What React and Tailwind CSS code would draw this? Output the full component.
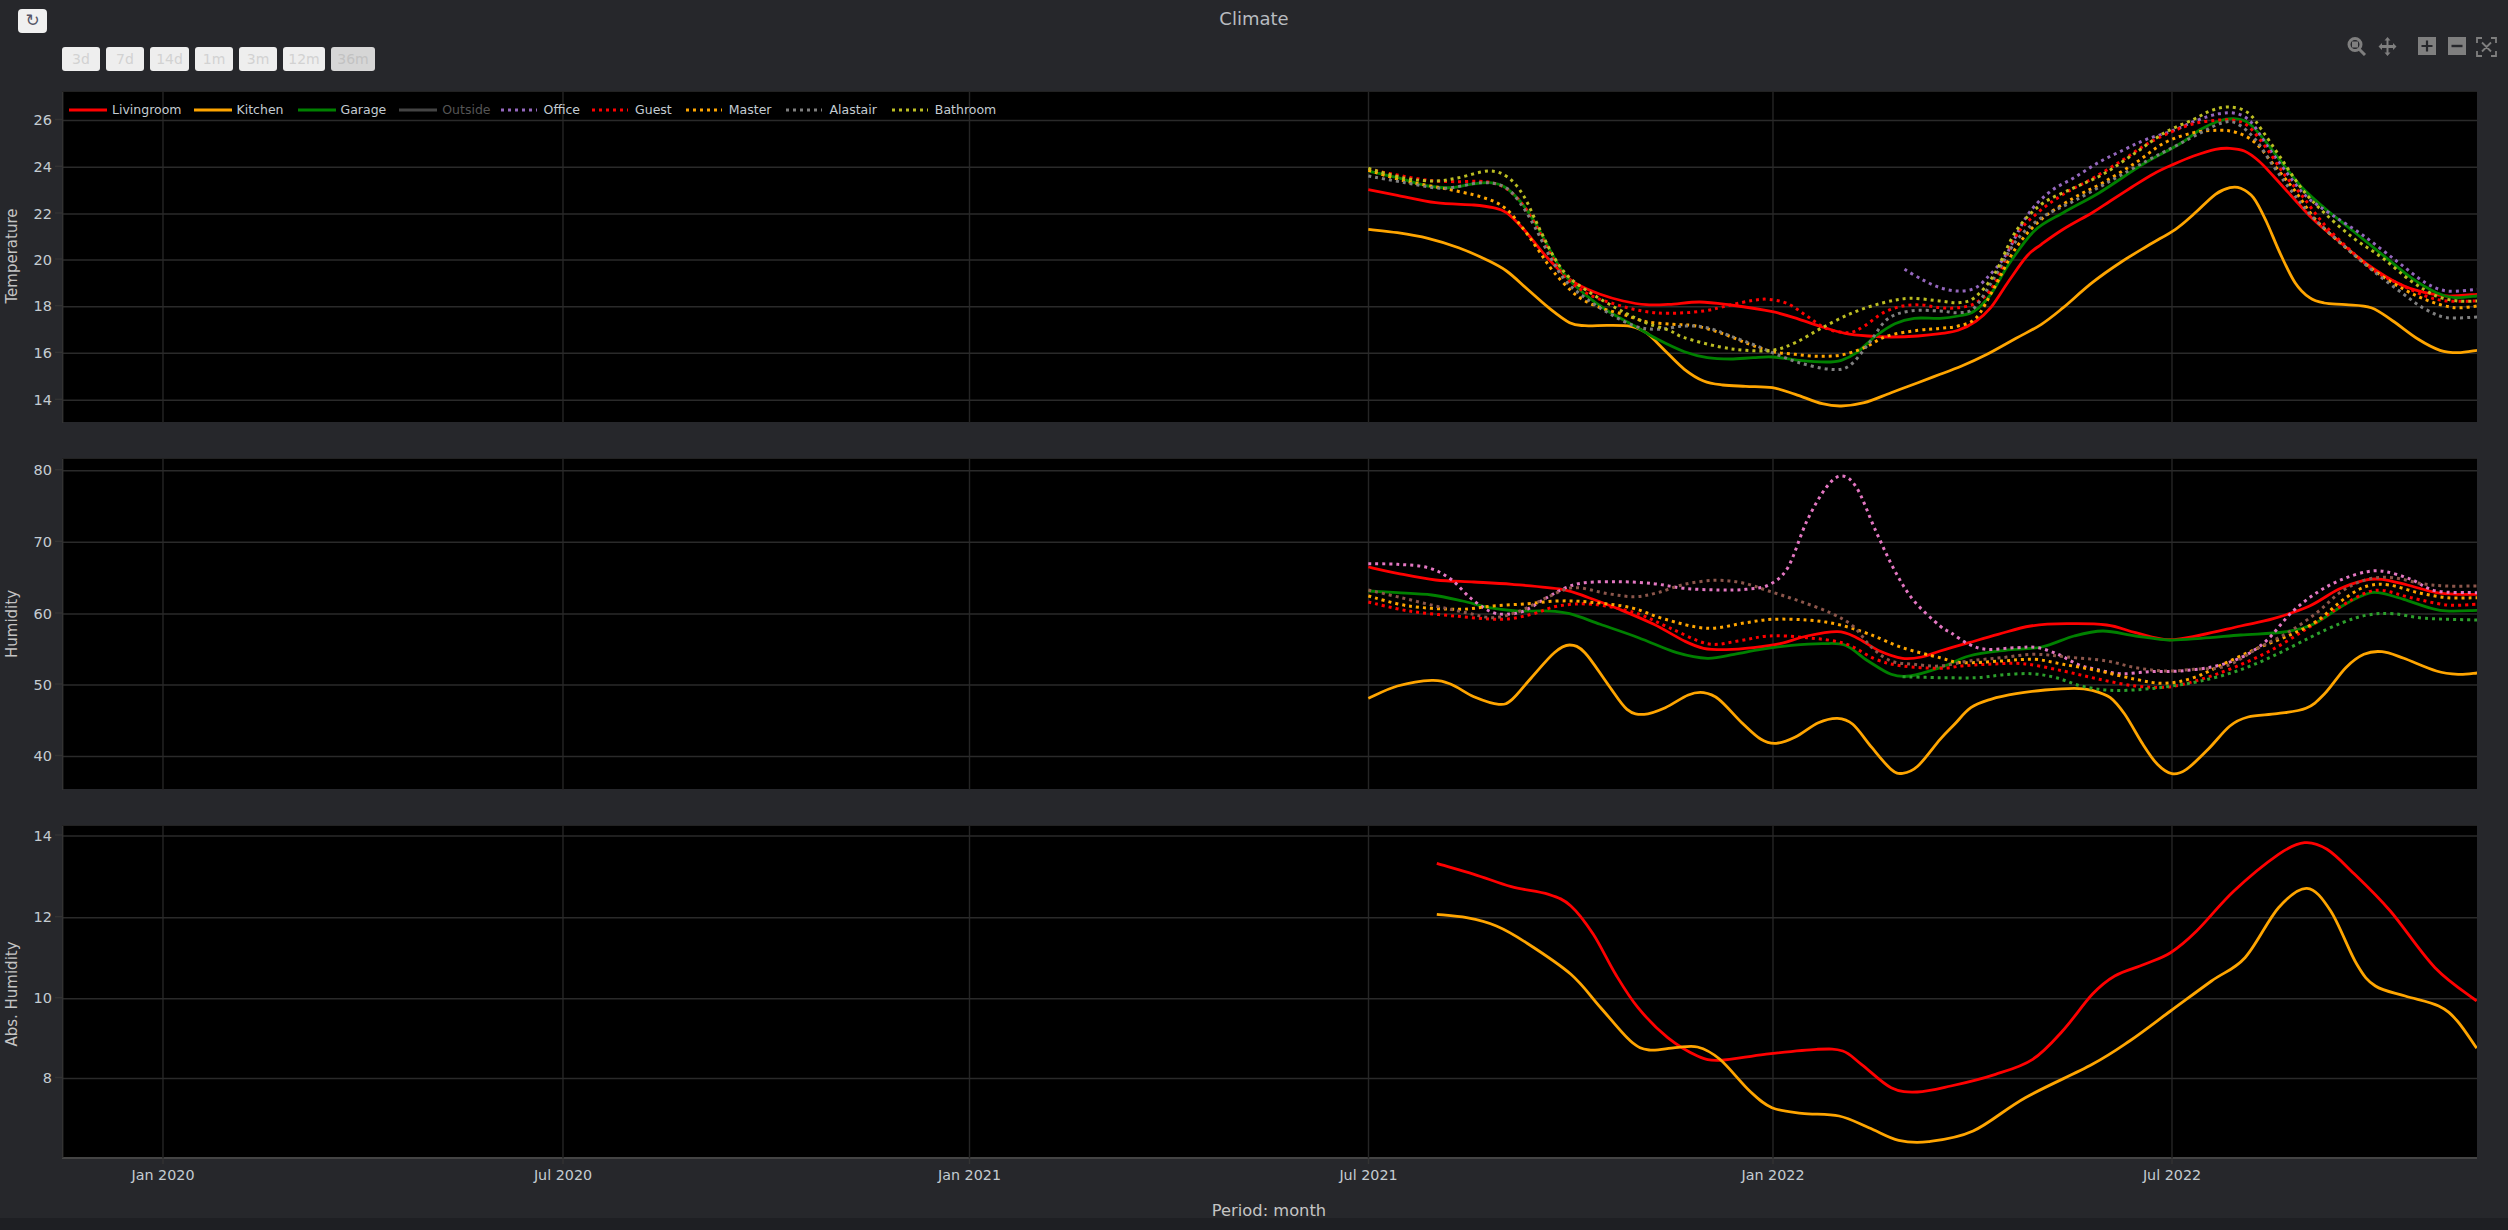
const SANS = "font-['DejaVu_Sans',sans-serif]";
const FONT = "'DejaVu Sans', sans-serif";

const RED = "#ff0000";
const ORANGE = "#ffa500";
const GREEN = "#008000";

// the curves were read off crops of the chart, so each chart has its own crop scale
const crop = (left, right, top, scaleL, scaleR) => [
  ...left.map(([x, y]) => [1340 + x / scaleL, top + y / 3]),
  ...right.map(([x, y]) => [1940 + x / scaleR, top + y / 3]),
];
const tempCrop = (l, r) => crop(l, r, 80, 2.613, 2.76);
const humCrop = (l, r) => crop(l, r, 450, 2.613, 2.76);
const absCrop = (pts) => pts.map(([x, y]) => [1340 + x / 1.3425, 810 + y / 3]);

function smoothPath(raw) {
  const pts = raw.filter((p, i) => i === 0 || p[0] - raw[i - 1][0] > 1);
  let d = `M${pts[0][0].toFixed(1)} ${pts[0][1].toFixed(1)}`;
  for (let i = 0; i < pts.length - 1; i++) {
    const p0 = pts[i - 1] || pts[i];
    const p1 = pts[i];
    const p2 = pts[i + 1];
    const p3 = pts[i + 2] || p2;
    const c1 = [p1[0] + (p2[0] - p0[0]) / 6, p1[1] + (p2[1] - p0[1]) / 6];
    const c2 = [p2[0] - (p3[0] - p1[0]) / 6, p2[1] - (p3[1] - p1[1]) / 6];
    d += `C${c1[0].toFixed(1)} ${c1[1].toFixed(1)} ${c2[0].toFixed(1)} ${c2[1].toFixed(1)} ${p2[0].toFixed(1)} ${p2[1].toFixed(1)}`;
  }
  return d;
}

const tempSeries = [
  { color: RED, pts: tempCrop(
    [[74,326],[150,343],[250,365],[350,372],[400,380],[435,395],[480,445],[530,515],[580,575],[620,610],[680,640],[740,660],[800,671],[860,670],[940,663],[1020,672],[1130,692],[1200,715],[1260,738],[1320,757],[1380,765],[1440,768],[1510,765],[1568,758]],
    [[0,758],[50,748],[100,720],[140,680],[190,600],[240,525],[280,490],[340,445],[420,395],[470,360],[530,318],[590,278],[640,252],[700,225],[760,205],[800,202],[840,210],[880,240],[920,285],[970,345],[1030,415],[1100,480],[1180,550],[1270,610],[1340,635],[1400,645],[1482,640]]) },
  { color: ORANGE, pts: tempCrop(
    [[74,445],[150,455],[230,472],[310,500],[380,535],[435,570],[490,625],[545,680],[600,725],[640,734],[700,733],[760,736],[800,755],[850,810],[900,865],[950,900],[1000,912],[1060,916],[1130,920],[1190,940],[1260,968],[1310,975],[1370,965],[1440,935],[1510,905],[1568,880]],
    [[0,885],[60,855],[130,820],[210,772],[280,730],[340,680],[420,605],[500,543],[580,490],[650,445],[700,400],[760,340],[800,320],[830,322],[865,350],[900,420],[940,520],[980,605],[1020,650],[1060,666],[1120,671],[1190,680],[1250,720],[1320,775],[1380,808],[1430,815],[1482,808]]) },
  { color: GREEN, pts: tempCrop(
    [[74,270],[150,290],[230,315],[290,320],[340,310],[390,305],[430,318],[470,360],[510,425],[550,510],[590,585],[640,640],[700,690],[770,735],[830,775],[900,812],[960,830],[1020,834],[1080,830],[1130,828],[1200,838],[1270,843],[1310,838],[1350,815],[1400,765],[1450,728],[1500,712],[1568,712]],
    [[0,712],[50,705],[95,690],[140,640],[190,550],[260,450],[340,395],[440,335],[560,250],[660,190],[720,145],[770,120],[810,113],[850,125],[890,170],[940,240],[1000,320],[1060,380],[1140,450],[1220,520],[1300,590],[1370,635],[1420,650],[1482,645]]) },
  { color: "#9467bd", dotted: true, pts: tempCrop(
    [[1475,565],[1520,595],[1568,620]],
    [[0,618],[50,630],[95,622],[130,590],[180,525],[240,405],[300,335],[370,290],[440,243],[510,205],[570,175],[640,150],[710,118],[770,98],[820,98],[860,125],[900,190],[950,265],[1010,345],[1080,400],[1170,465],[1260,540],[1340,605],[1400,630],[1482,625]]) },
  { color: RED, dotted: true, pts: tempCrop(
    [[74,265],[140,280],[230,298],[300,302],[380,302],[430,320],[470,360],[510,430],[550,520],[590,590],[650,640],[720,670],[790,690],[860,697],[950,690],[1020,672],[1080,658],[1120,655],[1170,668],[1220,705],[1270,742],[1330,755],[1370,735],[1420,695],[1470,675],[1520,672],[1568,680]],
    [[0,680],[50,680],[100,665],[150,610],[210,465],[270,395],[340,340],[420,293],[500,240],[570,190],[640,152],[700,128],[760,118],[810,118],[850,135],[900,200],[950,280],[1000,345],[1060,430],[1130,505],[1200,570],[1270,610],[1340,645],[1400,660],[1482,660]]) },
  { color: ORANGE, dotted: true, pts: tempCrop(
    [[74,268],[170,300],[270,322],[370,348],[430,380],[480,445],[520,510],[560,575],[620,645],[680,680],[740,700],[800,722],[870,730],[930,735],[1000,758],[1070,790],[1130,812],[1190,820],[1250,826],[1310,822],[1370,800],[1430,765],[1510,748],[1568,742]],
    [[0,742],[50,735],[100,710],[150,620],[210,500],[280,415],[370,350],[450,305],[540,245],[620,185],[700,155],[770,148],[820,155],[870,185],[920,250],[980,330],[1040,420],[1120,500],[1200,570],[1280,625],[1350,660],[1420,680],[1482,675]]) },
  { color: "#7f7f7f", dotted: true, pts: tempCrop(
    [[74,285],[170,305],[270,322],[370,305],[430,318],[470,365],[510,440],[550,530],[590,600],[640,650],[700,695],[770,735],[830,745],[900,735],[960,740],[1020,765],[1090,795],[1130,815],[1200,845],[1280,865],[1330,855],[1380,790],[1430,715],[1490,690],[1568,690]],
    [[0,692],[50,695],[95,680],[150,590],[210,480],[280,410],[370,360],[470,300],[570,240],[650,195],[720,155],[780,125],[820,128],[870,175],[920,255],[970,330],[1030,410],[1110,490],[1190,565],[1280,640],[1340,685],[1400,710],[1482,708]]) },
  { color: "#bcbd22", dotted: true, pts: tempCrop(
    [[74,262],[170,292],[250,300],[310,290],[390,270],[440,290],[480,345],[520,440],[560,530],[600,590],[660,640],[720,680],[770,710],[810,730],[860,748],[900,770],[990,797],[1060,808],[1130,808],[1190,785],[1260,740],[1340,695],[1420,665],[1490,652],[1568,660]],
    [[0,660],[50,665],[95,650],[150,580],[210,450],[280,370],[370,320],[450,280],[540,215],[620,155],[700,115],[750,88],[800,78],[850,95],[890,150],[940,230],[1000,325],[1060,395],[1140,470],[1220,530],[1300,600],[1370,645],[1430,660],[1482,660]]) },
];

const humSeries = [
  { color: RED, pts: humCrop(
    [[74,348],[150,367],[250,387],[350,393],[450,400],[580,415],[650,440],[730,475],[820,520],[900,570],[950,592],[1010,596],[1080,590],[1150,578],[1220,555],[1300,542],[1350,560],[1410,600],[1470,622],[1520,618],[1568,600]],
    [[0,602],[80,575],[160,550],[250,525],[350,518],[460,522],[540,545],[630,566],[720,552],[830,525],[920,503],[1020,465],[1100,415],[1170,388],[1220,385],[1290,402],[1370,425],[1430,430],[1482,430]]) },
  { color: ORANGE, pts: humCrop(
    [[74,742],[150,705],[240,688],[290,700],[350,737],[415,760],[450,745],[500,680],[560,605],[600,582],[640,605],[700,700],[750,775],[795,790],[850,770],[910,732],[950,725],[990,745],[1050,815],[1100,865],[1140,877],[1190,858],[1250,815],[1300,802],[1340,820],[1390,890],[1440,955],[1470,967],[1510,945],[1568,865]],
    [[0,875],[40,820],[85,770],[140,745],[210,728],[290,717],[370,712],[420,718],[470,740],[510,790],[560,880],[600,940],[640,968],[680,955],[740,895],[800,825],[850,798],[930,788],[1010,772],[1060,730],[1120,650],[1170,610],[1220,602],[1280,622],[1370,660],[1430,670],[1482,666]]) },
  { color: GREEN, pts: humCrop(
    [[74,420],[150,425],[240,432],[320,450],[390,470],[460,480],[540,480],[600,488],[680,520],[780,560],[880,605],[960,622],[1030,610],[1100,595],[1180,583],[1260,578],[1320,583],[1380,630],[1440,670],[1490,675],[1568,650]],
    [[0,648],[80,615],[180,598],[280,588],[370,555],[450,540],[540,555],[630,567],[720,562],[830,552],[950,543],[1030,520],[1110,465],[1170,432],[1210,425],[1280,445],[1380,478],[1482,478]]) },
  { color: "#e377c2", dotted: true, pts: humCrop(
    [[74,338],[150,340],[230,350],[290,385],[340,440],[390,480],[430,490],[480,480],[540,440],[590,410],[640,395],[730,392],[820,398],[900,412],[990,417],[1060,415],[1120,402],[1170,350],[1220,210],[1270,110],[1310,75],[1350,110],[1400,240],[1450,360],[1500,450],[1568,525]],
    [[0,520],[30,545],[80,580],[130,595],[210,590],[270,590],[330,612],[380,640],[430,655],[500,668],[580,662],[660,660],[750,648],[830,620],[900,570],[970,485],[1040,425],[1110,385],[1180,362],[1230,362],[1300,385],[1370,420],[1482,425]]) },
  { color: RED, dotted: true, pts: humCrop(
    [[74,453],[180,480],[300,495],[420,505],[500,490],[570,465],[660,460],[770,485],[860,530],[960,578],[1040,570],[1120,555],[1220,560],[1320,578],[1400,625],[1470,645],[1568,652]],
    [[0,650],[60,645],[130,640],[230,638],[340,660],[440,685],[540,705],[630,708],[720,685],[810,650],[910,600],[1010,535],[1100,470],[1170,428],[1220,418],[1300,440],[1400,462],[1482,460]]) },
  { color: ORANGE, dotted: true, pts: humCrop(
    [[74,435],[180,465],[310,475],[400,465],[490,458],[570,450],[650,453],[760,470],[850,505],[960,532],[1060,515],[1130,505],[1220,507],[1300,520],[1380,548],[1470,590],[1568,620]],
    [[0,620],[60,635],[170,630],[260,625],[340,640],[440,660],[540,685],[620,697],[700,680],[790,635],[880,590],[970,550],[1040,510],[1120,440],[1180,405],[1240,402],[1320,425],[1400,440],[1482,440]]) },
  { color: "#8c564b", dotted: true, pts: humCrop(
    [[74,417],[160,440],[250,465],[330,485],[400,500],[470,480],[540,440],[610,410],[700,428],[770,437],[830,425],[900,400],[980,388],[1050,395],[1120,420],[1200,450],[1280,485],[1340,525],[1390,590],[1440,630],[1500,640],[1568,645]],
    [[0,640],[80,630],[170,620],[260,610],[350,618],[460,630],[540,650],[620,660],[700,655],[790,645],[880,590],[960,545],[1040,485],[1110,420],[1180,385],[1250,380],[1330,398],[1400,405],[1482,405]]) },
  { color: "#2ca02c", dotted: true, pts: humCrop(
    [[1470,677],[1568,680]],
    [[0,680],[100,680],[170,672],[250,668],[320,680],[390,705],[470,718],[560,715],[640,705],[720,690],[820,660],[920,615],[1020,560],[1110,515],[1180,492],[1250,488],[1340,502],[1482,507]]) },
];

const absSeries = [
  { color: RED, pts: absCrop([[130,157],[180,190],[230,227],[280,250],[310,285],[340,370],[370,490],[400,590],[440,680],[480,735],[510,748],[570,730],[640,715],[675,720],[700,760],[740,830],[775,843],[820,825],[880,790],[930,745],[970,660],[1010,550],[1040,495],[1080,460],[1115,425],[1150,360],[1200,240],[1260,130],[1295,95],[1325,115],[1360,185],[1410,300],[1470,470],[1526,570]]) },
  { color: ORANGE, pts: absCrop([[130,310],[170,320],[210,345],[250,395],[310,490],[350,590],[390,690],[415,717],[450,710],[480,708],[510,745],[550,840],[580,890],[620,907],[670,915],[710,950],[750,988],[790,992],[850,960],[920,860],[1010,760],[1060,690],[1115,600],[1170,510],[1215,440],[1260,290],[1298,232],[1330,300],[1365,460],[1390,525],[1430,555],[1475,585],[1500,630],[1526,712]]) },
];

const VERTICALS = [163, 563, 969.5, 1368.5, 1773, 2172];

const legend = [
  { name: "Livingroom", color: RED, gap: "mr-[12px]" },
  { name: "Kitchen", color: ORANGE, gap: "mr-[14px]" },
  { name: "Garage", color: GREEN, gap: "mr-[13px]" },
  { name: "Outside", color: "#444444", muted: true, gap: "mr-[10px]" },
  { name: "Office", color: "#9467bd", dotted: true, gap: "mr-[12px]" },
  { name: "Guest", color: RED, dotted: true, gap: "mr-[14px]" },
  { name: "Master", color: ORANGE, dotted: true, gap: "mr-[15px]" },
  { name: "Alastair", color: "#7f7f7f", dotted: true, gap: "mr-[15px]" },
  { name: "Bathroom", color: "#bcbd22", dotted: true, gap: "" },
];

const ranges = [
  { label: "3d", width: "w-[38px]" },
  { label: "7d", width: "w-[38px]" },
  { label: "14d", width: "w-[39px]" },
  { label: "1m", width: "w-[38px]" },
  { label: "3m", width: "w-[38px]" },
  { label: "12m", width: "w-[42px]" },
  { label: "36m", width: "w-[44px]", active: true },
];

function Legend() {
  return (
    <div className={`absolute left-[7px] top-[9px] flex items-center text-[12.5px] leading-[18px] ${SANS}`}>
      {legend.map((item) => (
        <div key={item.name} className={`flex items-center ${item.gap}`}>
          <svg width="38" height="4" className="mr-[5px] shrink-0">
            <line
              x1="0"
              y1="2"
              x2={item.dotted ? 36 : 38}
              y2="2"
              stroke={item.color}
              strokeWidth="3"
              strokeDasharray={item.dotted ? "3 4" : undefined}
            />
          </svg>
          <span className={item.muted ? "text-[#555555]" : "text-[#c4ccd2]"}>{item.name}</span>
        </div>
      ))}
    </div>
  );
}

function Chart({ top, height, ticks, title, titleY, series, children, mt }) {
  return (
    <div className={`flex ${mt}`} style={{ height }}>
      <svg width="62" height={height} viewBox={`0 ${top} 62 ${height}`} className="shrink-0">
        <text
          transform={`translate(17 ${titleY}) rotate(-90)`}
          textAnchor="middle"
          fill="#c4c4c4"
          fontFamily={FONT}
          fontSize="15"
        >
          {title}
        </text>
        {ticks.map(([label, y]) => (
          <g key={label}>
            <line x1="55" y1={y} x2="62" y2={y} stroke="#333333" strokeWidth="1.4" />
            <text x="52" y={y + 5.5} textAnchor="end" fill="#c4ccd2" fontFamily={FONT} fontSize="14.5">
              {label}
            </text>
          </g>
        ))}
      </svg>
      <div className="relative w-[2415px] shrink-0 border-t border-[#222222] bg-black">
        <svg width="2415" height={height} viewBox={`62 ${top} 2415 ${height}`} className="absolute left-0 top-0">
          {VERTICALS.map((x) => (
            <line key={x} x1={x} y1={top} x2={x} y2={top + height} stroke="#252525" strokeWidth="1.4" />
          ))}
          {ticks.map(([label, y]) => (
            <line key={label} x1="62" y1={y} x2="2477" y2={y} stroke="#2a2a2a" strokeWidth="1.5" />
          ))}
          <line x1="62.7" y1={top} x2="62.7" y2={top + height} stroke="#333333" strokeWidth="1.4" />
          {series.map((s, i) => (
            <path
              key={i}
              d={smoothPath(s.pts)}
              fill="none"
              stroke={s.color}
              strokeWidth={s.dotted ? 3 : 2.8}
              strokeDasharray={s.dotted ? "3 4" : undefined}
            />
          ))}
        </svg>
        {children}
      </div>
    </div>
  );
}

function XAxis() {
  const labels = ["Jan 2020", "Jul 2020", "Jan 2021", "Jul 2021", "Jan 2022", "Jul 2022"];
  return (
    <svg width="2508" height="73" viewBox="0 1157 2508 73" className="block">
      <line x1="62" y1="1158" x2="2477" y2="1158" stroke="#444444" strokeWidth="2" />
      {VERTICALS.map((x, i) => (
        <g key={x}>
          <line x1={x} y1="1157" x2={x} y2="1164" stroke="#333333" strokeWidth="1.4" />
          <text x={x} y="1180" textAnchor="middle" fill="#c4ccd2" fontFamily={FONT} fontSize="14.3">
            {labels[i]}
          </text>
        </g>
      ))}
      <text x="1269" y="1216" textAnchor="middle" fill="#c4c4c4" fontFamily={FONT} fontSize="16.3">
        Period: month
      </text>
    </svg>
  );
}

function ModeBar() {
  return (
    <div className="flex items-start justify-end pr-[11px] pt-[37px]">
      <svg width="20" height="19" viewBox="0 0 20 19" className="mr-[11px]">
        <circle cx="8" cy="7.5" r="6" fill="none" stroke="#7f7f7f" strokeWidth="3" />
        <rect x="5" y="4.5" width="6" height="6" fill="#7f7f7f" />
        <path d="M12 12l6 6" stroke="#7f7f7f" strokeWidth="3" />
      </svg>
      <svg width="19" height="19" viewBox="0 0 19 19" className="mr-[21px]">
        <path
          d="M9.5 0l3 3.5h-2v4.5h4.5v-2l3.5 3.5-3.5 3.5v-2h-4.500v4.500h2l-3 3.500-3-3.500h2v-4.500h-4.500v2l-3.500-3.500 3.500-3.500v2h4.500v-4.500h-2z"
          fill="#7f7f7f"
        />
      </svg>
      <svg width="18" height="18" viewBox="0 0 18 18" className="mr-[12px]">
        <rect width="18" height="18" fill="#7f7f7f" />
        <path d="M9 3.500v11M3.500 9h11" stroke="#26272b" strokeWidth="2.200" />
      </svg>
      <svg width="18" height="18" viewBox="0 0 18 18" className="mr-[10px]">
        <rect width="18" height="18" fill="#7f7f7f" />
        <path d="M3.500 9h11" stroke="#26272b" strokeWidth="2.400" />
      </svg>
      <svg width="21" height="20" viewBox="0 0 21 20">
        <path
          d="M1 6V1h5M15 1h5v5M20 14v5h-5M6 19H1v-5M6 5.500l9 9M15 5.500l-9 9"
          fill="none"
          stroke="#7f7f7f"
          strokeWidth="1.800"
        />
      </svg>
    </div>
  );
}

function Header() {
  return (
    <div className="grid h-[91px] grid-cols-[1fr_auto_1fr]">
      <div>
        <button className={`ml-[18px] mt-[9px] flex h-[24px] w-[29px] items-center justify-center rounded-[4px] bg-[#f0f0f0] text-[17px] text-[#556] ${SANS}`}>
          ↻
        </button>
        <div className="ml-[62px] mt-[14px] flex gap-[6px]">
          {ranges.map((r) => (
            <button
              key={r.label}
              className={`flex h-[24px] items-center justify-center rounded-[3px] text-[14px] ${SANS} ${r.width} ${
                r.active ? "bg-[#d6d6d6] text-[#c2c2c2]" : "bg-[#eeeeee] text-[#d2d2d2]"
              }`}
            >
              {r.label}
            </button>
          ))}
        </div>
      </div>
      <h1 className={`pt-[7px] text-[18px] leading-[24px] font-normal text-[#b8bcc0] ${SANS}`}>Climate</h1>
      <ModeBar />
    </div>
  );
}

export default function App() {
  return (
    <div className="h-[1230px] w-[2508px] overflow-hidden bg-[#1e1f23]">
      <div className="h-[1218px] bg-[#26272b]">
        <Header />
        <Chart
          top={91}
          height={331}
          title="Temperature"
          titleY={256}
          series={tempSeries}
          ticks={[["26", 119.5], ["24", 166.3], ["22", 213], ["20", 259], ["18", 305.7], ["16", 352.3], ["14", 399.3]]}
        >
          <Legend />
        </Chart>
        <Chart
          top={458}
          height={331}
          mt="mt-[36px]"
          title="Humidity"
          titleY={624}
          series={humSeries}
          ticks={[["80", 469.7], ["70", 541.3], ["60", 613], ["50", 684], ["40", 755.5]]}
        />
        <Chart
          top={825}
          height={332}
          mt="mt-[36px]"
          title="Abs. Humidity"
          titleY={994}
          series={absSeries}
          ticks={[["14", 835], ["12", 916.7], ["10", 997.7], ["8", 1077.5]]}
        />
        <XAxis />
      </div>
    </div>
  );
}
